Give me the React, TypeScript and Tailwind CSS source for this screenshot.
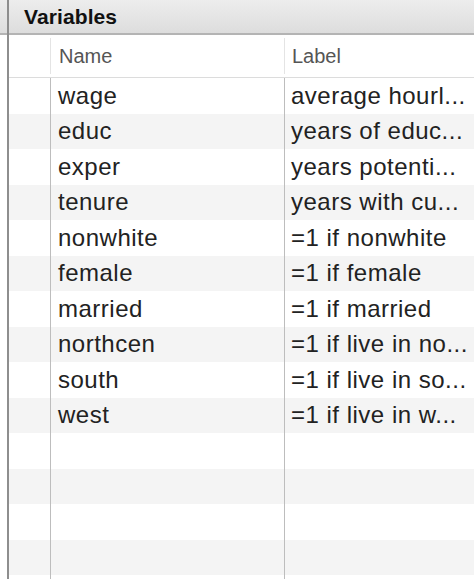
import React from "react";

const rows: [string, string][] = [
  ["wage", "average hourl..."],
  ["educ", "years of educ..."],
  ["exper", "years potenti..."],
  ["tenure", "years with cu..."],
  ["nonwhite", "=1 if nonwhite"],
  ["female", "=1 if female"],
  ["married", "=1 if married"],
  ["northcen", "=1 if live in no..."],
  ["south", "=1 if live in so..."],
  ["west", "=1 if live in w..."],
  ["", ""],
  ["", ""],
  ["", ""],
  ["", ""],
  ["", ""],
];

export default function App() {
  return (
    <div
      className="flex h-[579px] w-[474px] overflow-hidden bg-white text-[#222]"
      style={{ fontFamily: '"Liberation Sans", Arial, sans-serif' }}
    >
      {/* left gutter */}
      <div className="flex w-[7px] shrink-0 flex-col">
        <div className="h-[35px] shrink-0 border-b-2 border-[#b4b4b4] bg-gradient-to-b from-[#ededed] to-[#dddddd]" />
      </div>
      <div className="w-[2px] shrink-0 bg-[#8e8e8e]" />
      <div className="flex min-w-0 flex-1 flex-col overflow-hidden">
        {/* title bar */}
        <div className="flex h-[35px] shrink-0 items-center border-b-2 border-[#b4b4b4] bg-gradient-to-b from-[#ededed] to-[#dddddd] pl-[15px]">
          <span className="text-[21px] font-bold tracking-[0.1px] text-[#111]">Variables</span>
        </div>
        {/* column headers */}
        <div className="flex h-[43px] shrink-0 items-stretch border-b border-[#dcdcdc] bg-white text-[20px] text-[#555]">
          <div className="w-[41px]" />
          <div className="my-[3px] w-px bg-[#e4e4e4]" />
          <div className="flex w-[233px] items-center pl-[8px]">Name</div>
          <div className="my-[3px] w-px bg-[#e4e4e4]" />
          <div className="flex flex-1 items-center pl-[7px]">Label</div>
        </div>
        {/* rows */}
        <div className="flex shrink-0 flex-col">
          {rows.map(([name, label], i) => (
            <div
              key={i}
              className={`flex h-[35.5px] shrink-0 items-stretch text-[24px] leading-none tracking-[0.5px] ${
                i % 2 === 1 ? "bg-[#f4f4f4]" : "bg-white"
              }`}
            >
              <div className="w-[41px]" />
              <div className="w-px bg-[#bdbdbd]" />
              <div className="flex w-[233px] items-center pl-[7px] whitespace-nowrap">{name}</div>
              <div className="w-px bg-[#bdbdbd]" />
              <div className="flex flex-1 items-center overflow-hidden pl-[6px] whitespace-nowrap">
                {label}
              </div>
            </div>
          ))}
        </div>
      </div>
    </div>
  );
}
